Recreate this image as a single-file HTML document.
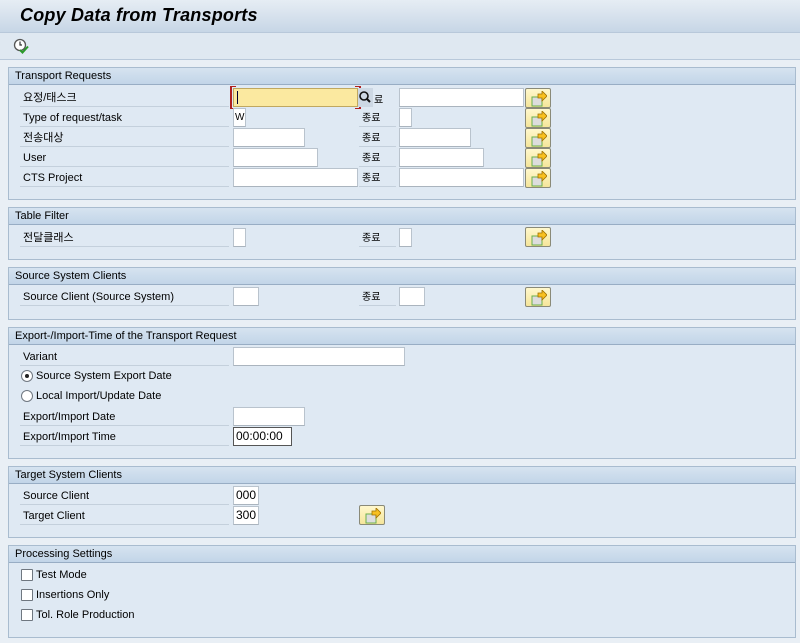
<!DOCTYPE html>
<html><head><meta charset="utf-8"><style>
*{margin:0;padding:0;box-sizing:border-box}
body{width:800px;height:643px;background:#e9eff5;font-family:"Liberation Sans","Noto Sans CJK KR",sans-serif;font-size:11px;color:#000;position:relative;overflow:hidden}
.a{position:absolute}
.title{left:0;top:0;width:800px;height:33px;background:linear-gradient(#e6edf4,#c7d6e6);border-bottom:1px solid #b8c8da}
.title span{position:absolute;left:20px;top:5px;font-size:18px;font-weight:bold;font-style:italic;color:#000;letter-spacing:0.2px}
.tb{left:0;top:33px;width:800px;height:27px;background:#dfe8f1;border-bottom:1px solid #b8c8da}
.sec{position:absolute;left:8px;width:788px;background:#dfe9f3;border:1px solid #a9bccf}
.sec .h{height:17px;background:linear-gradient(#d6e3f0,#c2d5e8);border-bottom:1px solid #98adc4;padding-left:6px;line-height:17px;font-size:11px}
.lb{position:absolute;left:20px;width:209px;height:20px;border-bottom:1px solid #c4d0dc;padding-left:3px;line-height:23px}
.lb2{position:absolute;left:359px;width:37px;height:20px;border-bottom:1px solid #c4d0dc;padding-left:3px;line-height:23px;font-size:10px}
.in{position:absolute;height:19px;background:#fff;border:1px solid #b9c3cd;border-bottom-color:#aab4be;font-size:12px;line-height:17px;padding-left:2px}
.bt{position:absolute;width:26px;height:20px;background:linear-gradient(#fff8cc,#f5e59a);border:1px solid #8a8a78;border-radius:2px}
.bt svg{position:absolute;left:5px;top:2px}
.rb,.cb{position:absolute;left:21px;width:12px;height:12px;background:#fff;border:1px solid #6f7780}
.rb{border-radius:50%}
.t{position:absolute;left:36px;line-height:14px}
</style></head><body>
<div class="a title"><span>Copy Data from Transports</span></div>
<div class="a tb">
<svg class="a" style="left:13px;top:5px" width="16" height="16" viewBox="0 0 16 16"><circle cx="7" cy="7" r="5.5" fill="#fff" stroke="#555" stroke-width="1.3"/><path d="M7 3.5V7h2" stroke="#333" fill="none" stroke-width="1.2"/><path d="M7 12l2.5 2.5L15 8.5" stroke="#2a9a2a" stroke-width="2" fill="none"/></svg>
</div>

<svg width="0" height="0" style="position:absolute"><defs><g id="ic"><rect x="1" y="6" width="10" height="9" fill="#ddd" stroke="#6ab04a"/><path d="M7 3h4V0l5 5-5 5V7H7z" fill="#f8c020" stroke="#a07000" stroke-width=".8"/></g></defs></svg>

<div class="sec" style="top:67px;height:133px"><div class="h">Transport Requests</div></div>
<div class="lb" style="top:87px">요정/태스크</div>
<div class="in" style="left:233px;top:88px;width:125px;background:#fbe9a0;border-color:#c0a860"><span style="display:inline-block;width:1px;height:13px;background:#003;margin-top:2px;margin-left:1px"></span></div>
<div class="a" style="left:230px;top:86px;width:131px;height:23px;border:1px solid #b02020;border-left-width:2px;border-right-width:2px;clip-path:polygon(0 0,6px 0,6px 100%,0 100%,0 0,100% 0,100% 100%,calc(100% - 6px) 100%,calc(100% - 6px) 0)"></div>
<div class="a" style="left:358px;top:88px;width:15px;height:19px;background:#cdd8e4"><svg width="14" height="16"><circle cx="6" cy="8" r="4" fill="none" stroke="#111" stroke-width="1.6"/><path d="M9 11l3 3" stroke="#111" stroke-width="2"/></svg></div>
<div class="a" style="left:374px;top:91px;font-size:10px">료</div>
<div class="in" style="left:399px;top:88px;width:125px"></div>
<div class="bt" style="left:525px;top:88px"><svg width="16" height="16"><use href="#ic"/></svg></div>

<div class="lb" style="top:107px">Type of request/task</div>
<div class="in" style="left:233px;top:108px;width:13px;font-size:10px;padding-left:1px">W</div>
<div class="lb2" style="top:107px">종료</div>
<div class="in" style="left:399px;top:108px;width:13px"></div>
<div class="bt" style="left:525px;top:108px"><svg width="16" height="16"><use href="#ic"/></svg></div>

<div class="lb" style="top:127px">전송대상</div>
<div class="in" style="left:233px;top:128px;width:72px"></div>
<div class="lb2" style="top:127px">종료</div>
<div class="in" style="left:399px;top:128px;width:72px"></div>
<div class="bt" style="left:525px;top:128px"><svg width="16" height="16"><use href="#ic"/></svg></div>

<div class="lb" style="top:147px">User</div>
<div class="in" style="left:233px;top:148px;width:85px"></div>
<div class="lb2" style="top:147px">종료</div>
<div class="in" style="left:399px;top:148px;width:85px"></div>
<div class="bt" style="left:525px;top:148px"><svg width="16" height="16"><use href="#ic"/></svg></div>

<div class="lb" style="top:167px">CTS Project</div>
<div class="in" style="left:233px;top:168px;width:125px"></div>
<div class="lb2" style="top:167px">종료</div>
<div class="in" style="left:399px;top:168px;width:125px"></div>
<div class="bt" style="left:525px;top:168px"><svg width="16" height="16"><use href="#ic"/></svg></div>

<div class="sec" style="top:207px;height:53px"><div class="h">Table Filter</div></div>
<div class="lb" style="top:227px">전달클래스</div>
<div class="in" style="left:233px;top:228px;width:13px"></div>
<div class="lb2" style="top:227px">종료</div>
<div class="in" style="left:399px;top:228px;width:13px"></div>
<div class="bt" style="left:525px;top:227px"><svg width="16" height="16"><use href="#ic"/></svg></div>

<div class="sec" style="top:267px;height:53px"><div class="h">Source System Clients</div></div>
<div class="lb" style="top:286px">Source Client (Source System)</div>
<div class="in" style="left:233px;top:287px;width:26px"></div>
<div class="lb2" style="top:286px">종료</div>
<div class="in" style="left:399px;top:287px;width:26px"></div>
<div class="bt" style="left:525px;top:287px"><svg width="16" height="16"><use href="#ic"/></svg></div>

<div class="sec" style="top:327px;height:132px"><div class="h">Export-/Import-Time of the Transport Request</div></div>
<div class="lb" style="top:346px">Variant</div>
<div class="in" style="left:233px;top:347px;width:172px"></div>
<div class="rb" style="top:370px"><div style="width:4px;height:4px;background:#222;border-radius:50%;margin:3px"></div></div>
<div class="t" style="top:369px">Source System Export Date</div>
<div class="rb" style="top:390px"></div>
<div class="t" style="top:389px">Local Import/Update Date</div>
<div class="lb" style="top:406px">Export/Import Date</div>
<div class="in" style="left:233px;top:407px;width:72px"></div>
<div class="lb" style="top:426px">Export/Import Time</div>
<div class="in" style="left:233px;top:427px;width:59px;border-color:#555">00:00:00</div>

<div class="sec" style="top:466px;height:72px"><div class="h">Target System Clients</div></div>
<div class="lb" style="top:485px">Source Client</div>
<div class="in" style="left:233px;top:486px;width:26px">000</div>
<div class="lb" style="top:505px">Target Client</div>
<div class="in" style="left:233px;top:506px;width:26px">300</div>
<div class="bt" style="left:359px;top:505px"><svg width="16" height="16"><use href="#ic"/></svg></div>

<div class="sec" style="top:545px;height:93px"><div class="h">Processing Settings</div></div>
<div class="cb" style="top:569px;border-radius:1px"></div><div class="t" style="top:568px">Test Mode</div>
<div class="cb" style="top:589px;border-radius:1px"></div><div class="t" style="top:588px">Insertions Only</div>
<div class="cb" style="top:609px;border-radius:1px"></div><div class="t" style="top:608px">Tol. Role Production</div>
</body></html>
